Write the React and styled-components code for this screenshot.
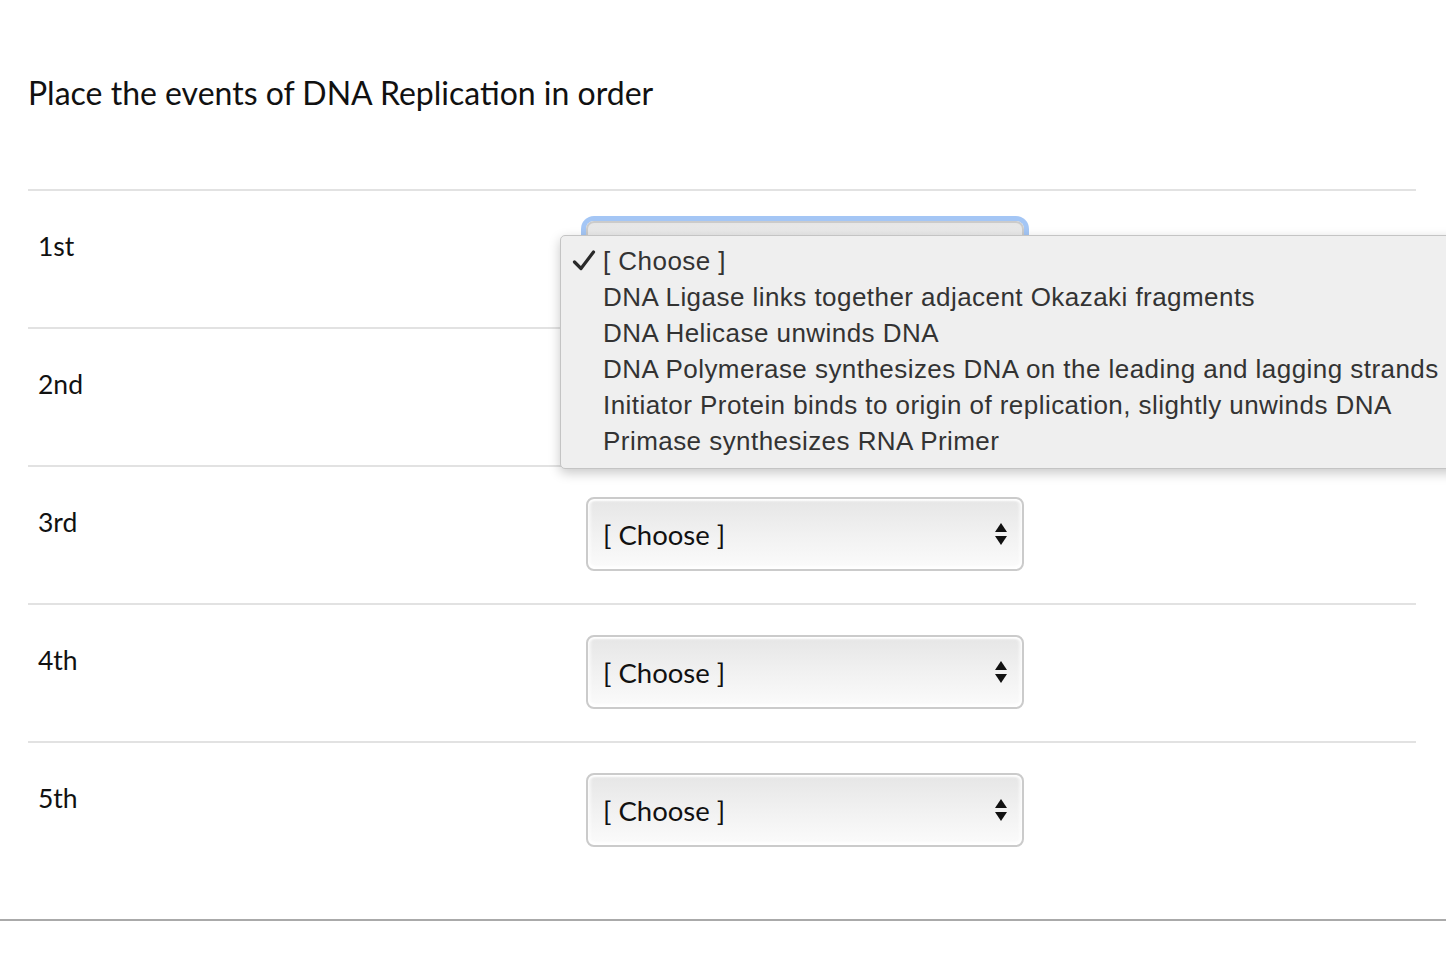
import React from 'react'
import styled, { createGlobalStyle } from 'styled-components'

const GlobalStyle = createGlobalStyle`
  body {
    margin: 0;
    background: #fff;
    overflow: hidden;
    font-family: Lato, "Open Sans", sans-serif;
    color: #111;
  }
`

const options = [
  'DNA Ligase links together adjacent Okazaki fragments',
  'DNA Helicase unwinds DNA',
  'DNA Polymerase synthesizes DNA on the leading and lagging strands',
  'Initiator Protein binds to origin of replication, slightly unwinds DNA',
  'Primase synthesizes RNA Primer',
]

const rows = ['1st', '2nd', '3rd', '4th', '5th']

const Arrows = () => (
  <svg width="14" height="26" viewBox="0 0 14 26">
    <path d="M7 2 L13 11 L1 11 Z" fill="#111" />
    <path d="M7 24 L13 15 L1 15 Z" fill="#111" />
  </svg>
)

const CheckIcon = () => (
  <svg width="24" height="24" viewBox="0 0 24 24">
    <path d="M2.5 13 L9 19.5 L21.5 3" fill="none" stroke="#2a2a2a" strokeWidth="3.2" strokeLinecap="round" strokeLinejoin="round" />
  </svg>
)

const Page = () => {
  return (
    <>
      <GlobalStyle />
      <Wrapper>
        <Question>
          <Title>Place the events of DNA Replication in order</Title>
          <Table>
            {rows.map((r, i) => (
              <Row key={r}>
                <Label>{r}</Label>
                <Cell>
                  <SelectBox focused={i === 0}>
                    <span>[ Choose ]</span>
                    <Arrows />
                  </SelectBox>
                  {i === 0 && (
                    <Menu>
                      <MenuItem>
                        <Check><CheckIcon /></Check>[ Choose ]
                      </MenuItem>
                      {options.map((o) => (
                        <MenuItem key={o}>{o}</MenuItem>
                      ))}
                    </Menu>
                  )}
                </Cell>
              </Row>
            ))}
          </Table>
        </Question>
        <Footer />
      </Wrapper>
    </>
  )
}

const Wrapper = styled.div`
  width: 1446px;
  height: 968px;
`
const Question = styled.div`
  padding: 73px 30px 40px 28px;
`
const Title = styled.h1`
  margin: 0;
  font-size: 32px;
  font-weight: 400;
  line-height: 40px;
  color: #111;
`
const Table = styled.div`
  margin-top: 76px;
`
const Row = styled.div`
  display: grid;
  grid-template-columns: 558px 1fr;
  height: 138px;
  border-top: 2px solid #e2e2e2;
  box-sizing: border-box;
`
const Label = styled.div`
  padding: 41px 0 0 10px;
  font-size: 26.5px;
  line-height: 28px;
  color: #111;
`
const Cell = styled.div`
  position: relative;
  padding-top: 30px;
`
const SelectBox = styled.div`
  width: 438px;
  height: 74px;
  box-sizing: border-box;
  display: flex;
  align-items: center;
  justify-content: space-between;
  padding: 0 14px 0 15px;
  border: 2px solid #cbcbcb;
  border-radius: 8px;
  background: linear-gradient(#e6e6e6, #f2f2f2 55%, #fbfbfb);
  box-shadow: ${(p) =>
    p.focused
      ? '0 0 0 5px #a4c6f5'
      : 'inset 0 2px 2px rgba(255,255,255,0.95), inset 0 -3px 3px rgba(255,255,255,0.9), inset 3px 0 3px rgba(255,255,255,0.6), inset -3px 0 3px rgba(255,255,255,0.6)'};
  font-size: 27.5px;
  color: #111;
`
const Menu = styled.div`
  position: absolute;
  left: -26px;
  top: 44px;
  width: 920px;
  padding: 7px 0 9px;
  background: #efefef;
  border: 1px solid #c4c4c4;
  border-radius: 5px;
  box-shadow: 0 4px 12px rgba(0, 0, 0, 0.22);
  z-index: 2;
`
const MenuItem = styled.div`
  position: relative;
  padding-left: 42px;
  height: 36px;
  line-height: 36px;
  font-family: "Liberation Sans", Arial, sans-serif;
  font-size: 26px;
  letter-spacing: 0.45px;
  color: #333;
  white-space: nowrap;
`
const Check = styled.span`
  position: absolute;
  left: 11px;
  top: 6px;
  display: flex;
`
const Footer = styled.div`
  height: 2px;
  background: #aaa;
`

export default Page
